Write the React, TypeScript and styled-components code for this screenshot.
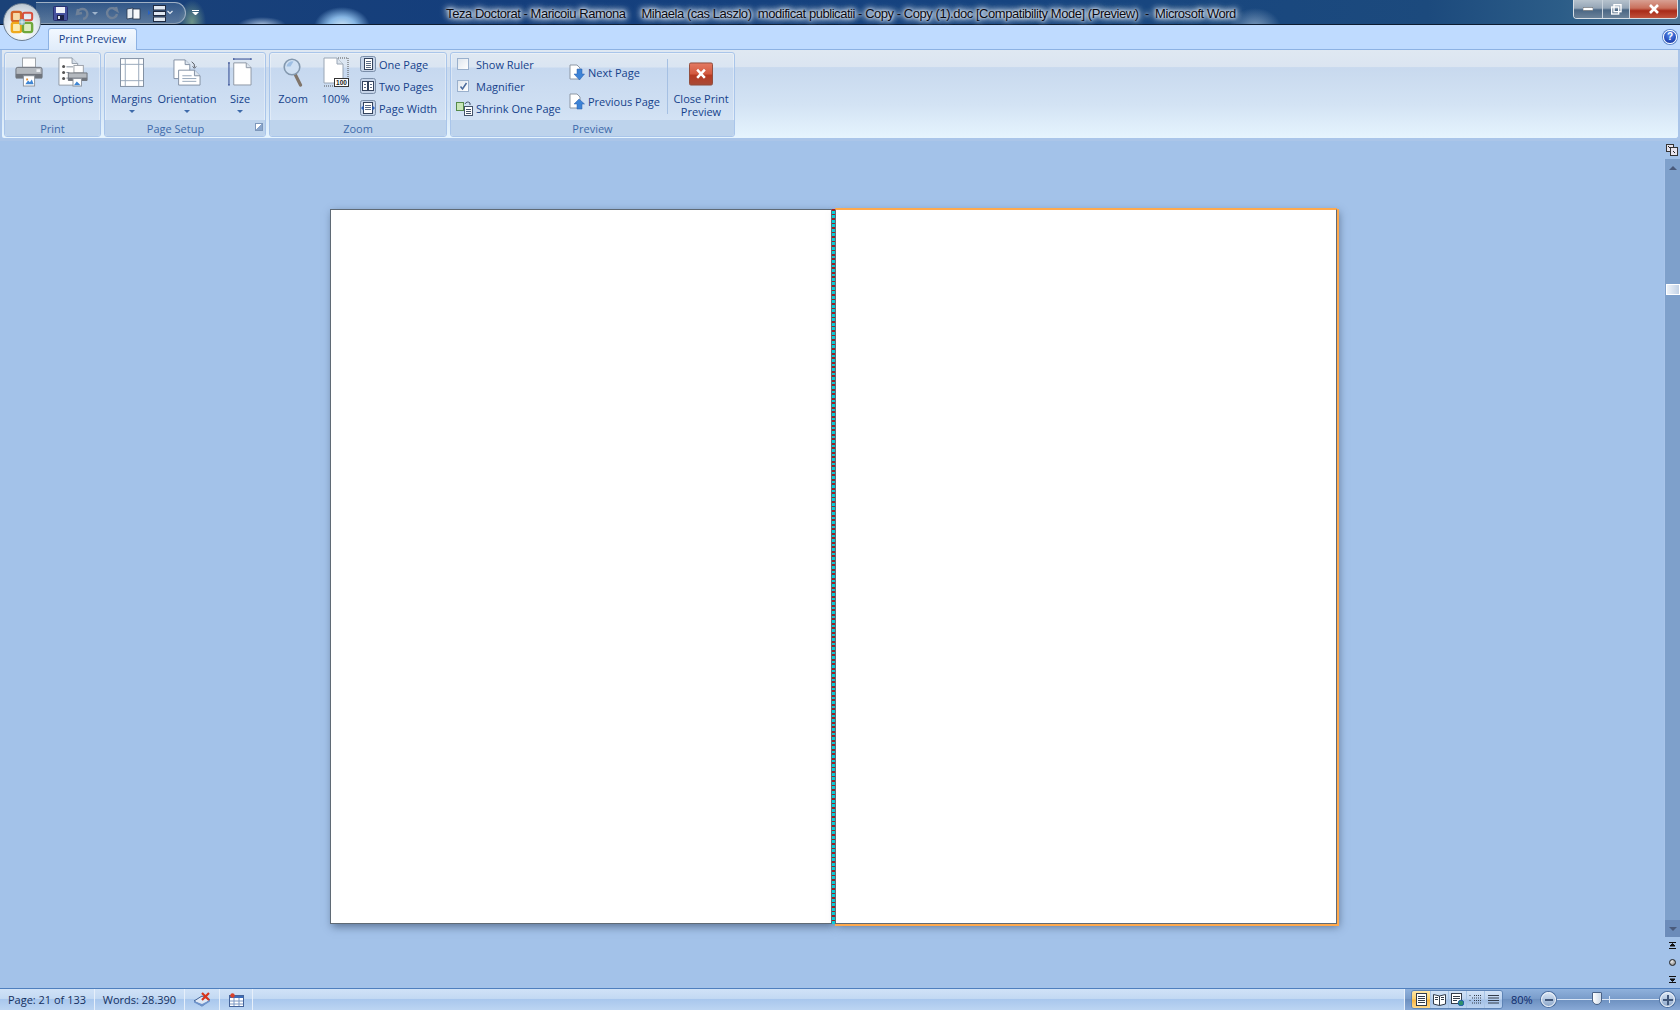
import React from 'react';
import styled, { createGlobalStyle } from 'styled-components';

const GlobalStyle = createGlobalStyle`
  html, body {
    margin: 0;
    padding: 0;
    height: 100%;
    overflow: hidden;
    background: #a3c2e9;
  }
  #root { height: 100%; }
`;

const Shell = styled.div`
  width: 1680px;
  height: 1010px;
  display: flex;
  flex-direction: column;
  overflow: hidden;
  background: #abc5e8;
  font-family: 'Open Sans', 'Noto Sans', 'Liberation Sans', sans-serif;
  color: #15428b;
`;

/* ---------- title bar ---------- */
const TitleBar = styled.div`
  height: 24px;
  flex: none;
  display: flex;
  align-items: flex-start;
  border-bottom: 1px solid #0d1c30;
  background:
    radial-gradient(ellipse 28px 20px at 342px 27px, #d3e8f8 0%, #86b6e4 50%, transparent 100%),
    radial-gradient(ellipse 24px 8px at 262px 25px, #a8bfdc 0%, transparent 100%),
    radial-gradient(ellipse 14px 22px at 192px 22px, #6d9488 0%, transparent 100%),
    radial-gradient(ellipse 26px 20px at 1255px 28px, #7e9cbd 0%, transparent 100%),
    linear-gradient(90deg, #1b4278 0%, #143e7c 30%, #164480 60%, #1c4a7d 85%, #2c5d88 93%, #4d7595 100%);
`;

const Orb = styled.div`
  width: 38px;
  height: 38px;
  flex: none;
  margin: 3px 0 0 3px;
  border-radius: 50%;
  background: radial-gradient(circle at 50% 72%, #ffffff 0%, #e6edf3 45%, #a9b6c3 100%);
  border: 1px solid #6d7f93;
  box-sizing: border-box;
  display: flex;
  align-items: center;
  justify-content: center;
  z-index: 2;
`;

const Quick = styled.div`
  margin: 2px 0 0 -5px;
  padding-left: 17px;
  height: 22px;
  width: 150px;
  flex: none;
  border: 1px solid #9fb0c4;
  border-left: none;
  border-bottom-color: #8a9db2;
  border-radius: 0 12px 12px 0;
  background: linear-gradient(180deg, #4d70987a 0%, #7f97b0a0 100%);
  display: flex;
  align-items: center;
  gap: 7px;
  box-sizing: border-box;
`;

const QuickGroup = styled.div`
  display: flex;
  align-items: center;
  gap: 3px;
`;

const QuickMiniCaret = styled.div`
  width: 0;
  height: 0;
  border: 3px solid transparent;
  border-bottom: none;
  border-top-color: #9fb4cc;
`;

const QuickCaret = styled.div`
  margin: 10px 0 0 6px;
  width: 7px;
  flex: none;
  border-top: 1px solid #fff;
  &::after {
    content: '';
    display: block;
    margin-top: 1px;
    border: 3.5px solid transparent;
    border-bottom: none;
    border-top-color: #fff;
  }
`;

const TitleText = styled.div`
  flex: 1;
  text-align: center;
  white-space: pre;
  margin-right: 90px;
  padding-top: 6px;
  font-family: 'Liberation Sans', sans-serif;
  font-size: 13px;
  letter-spacing: -0.455px;
  line-height: 15px;
  color: #0a0a12;
  text-shadow: 0 0 6px #e8f2ff, 0 0 6px #e8f2ff, 0 0 10px #fff, 0 0 3px #fff;
`;

const WindowButtons = styled.div`
  display: flex;
  flex: none;
  margin-right: 2px;
  height: 18px;
  border: 1px solid #d8dfe6;
  border-top: none;
  border-radius: 0 0 4px 4px;
  overflow: hidden;
`;

const WinButton = styled.div<{ $w: number; $red?: boolean }>`
  width: ${(p) => p.$w}px;
  display: flex;
  align-items: center;
  justify-content: center;
  border-left: 1px solid #c8d2dc;
  &:first-child { border-left: none; }
  background: ${(p) =>
    p.$red
      ? 'linear-gradient(180deg, #d8a093 0%, #c9705c 45%, #a92a18 60%, #c0523c 100%)'
      : 'linear-gradient(180deg, #b6c2cd 0%, #94a5b6 45%, #4a6684 55%, #6b8299 100%)'};
`;

/* ---------- ribbon ---------- */
const TabRow = styled.div`
  height: 24px;
  flex: none;
  background: #bfdbff;
  display: flex;
  align-items: flex-end;
  justify-content: space-between;
  padding: 0 4px 0 48px;
  border-bottom: 1px solid #8db2e3;
`;

const Tab = styled.div`
  width: 89px;
  height: 22px;
  box-sizing: border-box;
  margin-bottom: -1px;
  padding-top: 2px;
  text-align: center;
  font-size: 11px;
  line-height: 16px;
  border: 1px solid #8db2e3;
  border-bottom: none;
  border-radius: 3px 3px 0 0;
  background: linear-gradient(180deg, #f2f8ff 0%, #e0ecfa 100%);
`;

const Help = styled.div`
  width: 14px;
  height: 14px;
  margin: 0 -1px 5px 0;
  border-radius: 50%;
  background: radial-gradient(circle at 50% 30%, #5a8ff0, #1a3fae 75%);
  border: 1px solid #fff;
  box-shadow: 0 0 0 1px #5f86c9;
  box-sizing: border-box;
  color: #fff;
  font: bold 10px/12px 'Liberation Sans', sans-serif;
  text-align: center;
`;

const Ribbon = styled.div`
  height: 89px;
  flex: none;
  box-sizing: border-box;
  margin: 0 1px 2px;
  padding: 2px 3px 1px 2px;
  display: flex;
  gap: 3px;
  border: 1px solid #a9c5ea;
  border-top: none;
  border-radius: 0 0 3px 3px;
  background: linear-gradient(180deg, #dfe8f2 0%, #dbe5f1 19%, #c8d9ee 20%, #d3e3f4 62%, #e6f4fe 100%);
`;

const Group = styled.div<{ $w: number }>`
  width: ${(p) => p.$w}px;
  flex: none;
  box-sizing: border-box;
  display: flex;
  flex-direction: column;
  border: 1px solid #a9c5ea;
  border-radius: 3px;
  overflow: hidden;
  background: linear-gradient(180deg, #dfe8f2 0%, #dae5f2 17%, #c6d8ef 18%, #d0e0f3 70%, #d9e7f8 100%);
  box-shadow: inset 0 0 0 1px rgba(255, 255, 255, 0.35);
`;

const GroupBody = styled.div<{ $pad?: number }>`
  flex: 1;
  display: flex;
  padding: 2px 0 0 ${(p) => p.$pad ?? 0}px;
  min-height: 0;
`;

const GroupLabel = styled.div<{ $offset?: number }>`
  height: 16px;
  flex: none;
  box-sizing: border-box;
  padding-right: ${(p) => p.$offset ?? 0}px;
  display: flex;
  align-items: center;
  justify-content: center;
  position: relative;
  font-size: 11px;
  line-height: 15px;
  color: #3e6aaa;
  background: #bdd3ec;
`;

const Launcher = styled.div`
  position: absolute;
  right: 2px;
  top: 3px;
  width: 8px;
  height: 8px;
  box-sizing: border-box;
  border: 1px solid #7d97ba;
  background: linear-gradient(135deg, #fff 50%, #8aa6cc 50%);
`;

const BigButton = styled.div<{ $w: number }>`
  width: ${(p) => p.$w}px;
  flex: none;
  display: flex;
  flex-direction: column;
  align-items: center;
  text-align: center;
  font-size: 11px;
  line-height: 13px;
  white-space: nowrap;
`;

const BigIcon = styled.div<{ $shift?: number }>`
  height: 34px;
  box-sizing: border-box;
  padding-top: ${(p) => p.$shift ?? 0}px;
  display: flex;
  align-items: center;
  justify-content: center;
  margin-bottom: 3px;
  flex: none;
`;

const DownCaret = styled.div`
  width: 0;
  height: 0;
  margin-top: 5px;
  border: 3px solid transparent;
  border-bottom: none;
  border-top: 3px solid #3e6aaa;
`;

const SmallColumn = styled.div<{ $w: number; $gap?: number; $top?: number }>`
  width: ${(p) => p.$w}px;
  flex: none;
  display: flex;
  flex-direction: column;
  gap: ${(p) => p.$gap ?? 0}px;
  margin-top: ${(p) => p.$top ?? 0}px;
`;

const SmallRow = styled.div`
  height: 22px;
  display: flex;
  align-items: center;
  gap: 3px;
  padding-left: 1px;
  font-size: 11px;
  white-space: nowrap;
`;

const CheckBox = styled.div<{ $on?: boolean }>`
  width: 10px;
  height: 10px;
  flex: none;
  margin: 0 4px 0 1px;
  border: 1px solid #9ab0cc;
  background: linear-gradient(135deg, #dfe6ee, #ffffff);
  display: flex;
  align-items: center;
  justify-content: center;
`;

const VDivider = styled.div`
  width: 1px;
  height: 55px;
  margin: 4px 0 0;
  flex: none;
  background: #a5c0e3;
`;

/* ---------- document area ---------- */
const Middle = styled.div`
  flex: 1;
  display: flex;
  min-height: 0;
  background: #a3c2e9;
`;

const Preview = styled.div`
  flex: 1;
  display: flex;
  align-items: flex-start;
  padding: 68px 0 0 330px;
`;

const Page = styled.div<{ $active?: boolean }>`
  width: 502px;
  height: 715px;
  box-sizing: border-box;
  flex: none;
  background: #fff;
  border: 1px solid #5f6a75;
  ${(p) => (p.$active ? 'border-top-color: #ffa94d;' : '')}
  box-shadow: ${(p) =>
    p.$active ? '0 -1px 0 #ffa94d, 2px 2px 0 #ffa94d, 2px 0 0 #ffa94d, 0 2px 0 #ffa94d,' : ''} 2px 3px 8px rgba(50, 70, 100, 0.6);
`;

const PageSeam = styled.div`
  width: 3px;
  height: 715px;
  flex: none;
  background: repeating-linear-gradient(180deg, #b01818 0 1.5px, #00e0e8 1.5px 4.5px);
`;

const ScrollBar = styled.div`
  width: 16px;
  flex: none;
  display: flex;
  flex-direction: column;
`;

const SplitIcon = styled.div`
  height: 18px;
  flex: none;
  display: flex;
  align-items: center;
  justify-content: center;
`;

const Track = styled.div`
  flex: 1;
  display: flex;
  flex-direction: column;
  align-items: center;
  background: #7ea0cb;
  border-left: 1px solid #a9c5ea;
`;

const TrackArrow = styled.div<{ $up?: boolean }>`
  height: 17px;
  width: 100%;
  flex: none;
  display: flex;
  align-items: center;
  justify-content: center;
  ${(p) => (p.$up ? '' : 'background: #6c8cba;')}
  &::after {
    content: '';
    border: 4px solid transparent;
    ${(p) => (p.$up ? 'border-top: none; border-bottom: 4px solid #4a5b7c;' : 'border-bottom: none; border-top: 4px solid #4a5b7c;')}
  }
`;

const Thumb = styled.div`
  width: 14px;
  height: 11px;
  margin-top: 108px;
  flex: none;
  border: 1px solid #fff;
  box-sizing: border-box;
  background: linear-gradient(90deg, #eef3f9, #c3d2e6);
`;

const TrackGap = styled.div`
  flex: 1;
`;

const BrowseButtons = styled.div`
  height: 51px;
  flex: none;
  display: flex;
  flex-direction: column;
  align-items: center;
  justify-content: center;
  gap: 10px;
  box-sizing: border-box;
`;

const BrowseBall = styled.div`
  width: 7px;
  height: 7px;
  box-sizing: border-box;
  border-radius: 50%;
  border: 1px solid #222;
  background: radial-gradient(circle at 35% 30%, #eee, #777);
`;

/* ---------- status bar ---------- */
const StatusBar = styled.div`
  height: 22px;
  flex: none;
  box-sizing: border-box;
  display: flex;
  align-items: center;
  border-top: 1px solid #4f7fbe;
  background: linear-gradient(180deg, #d0e2f7 0%, #c3d9f3 45%, #a9c7ed 50%, #bcd5f2 100%);
  font-size: 11px;
  color: #15305e;
`;

const StatusCell = styled.div<{ $w: number }>`
  width: ${(p) => p.$w}px;
  height: 100%;
  flex: none;
  box-sizing: border-box;
  display: flex;
  align-items: center;
  justify-content: center;
  border-right: 1px solid #e6effa;
  white-space: nowrap;
`;

const StatusFill = styled.div`
  flex: 1;
  height: 100%;
`;

const ViewRight = styled.div`
  width: 276px;
  height: 100%;
  flex: none;
  display: flex;
  align-items: center;
  padding: 0 4px 0 6px;
  box-sizing: border-box;
  background: linear-gradient(180deg, #8fb1dc 0%, #7a9dcb 45%, #6d90c0 50%, #88a9d6 100%);
  border-left: 1px solid #e6effa;
`;

const ViewButtons = styled.div`
  display: flex;
  height: 19px;
  box-sizing: border-box;
  border: 1px solid #5d83b5;
  border-radius: 3px;
  overflow: hidden;
  flex: none;
`;

const ViewButton = styled.div<{ $on?: boolean }>`
  width: 18px;
  box-sizing: border-box;
  display: flex;
  align-items: center;
  justify-content: center;
  border-left: 1px solid #a8c4e6;
  &:first-child { border-left: none; }
  background: ${(p) =>
    p.$on
      ? 'linear-gradient(180deg, #ffe7a8 0%, #ffd36e 45%, #f8b544 55%, #ffd98a 100%)'
      : 'linear-gradient(180deg, #d2e2f6 0%, #bed4f0 45%, #a3c0e6 55%, #bcd3f0 100%)'};
`;

const ZoomPct = styled.div`
  width: 29px;
  margin-left: 8px;
  flex: none;
  font-size: 11px;
  color: #0d2a6b;
`;

const ZoomRound = styled.div`
  width: 15px;
  height: 15px;
  margin: 0 1px;
  flex: none;
  box-sizing: border-box;
  border-radius: 50%;
  border: 1px solid #fff;
  box-shadow: 0 0 0 1px #4e6f9e;
  background: linear-gradient(180deg, #d6e3f3, #8ea9cc);
  display: flex;
  align-items: center;
  justify-content: center;
`;

const ZoomTrack = styled.div`
  flex: 1;
  height: 1px;
  background: #d9e6f6;
  position: relative;
`;

const ZoomTick = styled.div`
  position: absolute;
  left: 50.500%;
  top: -3px;
  width: 1px;
  height: 7px;
  background: #d9e6f6;
`;

const ZoomKnob = styled.div`
  position: absolute;
  left: 34.600%;
  top: -7px;
  width: 8px;
  height: 11px;
  border: 1px solid #4a6387;
  border-radius: 1px 1px 5px 5px;
  background: linear-gradient(90deg, #fff, #cfdbe9);
`;

const OfficeLogo = () => (
  <svg width="24" height="24" viewBox="0 0 26 26">
    <rect x="2" y="2" width="10" height="10" rx="2" fill="#f6d9a8" stroke="#d4662a" strokeWidth="2.6" />
    <rect x="14" y="3" width="10" height="8" rx="2" fill="none" stroke="#d6503f" strokeWidth="2.2" />
    <rect x="2" y="14" width="10" height="10" rx="2" fill="#fbeab0" stroke="#efa91c" strokeWidth="2.6" />
    <rect x="14" y="14" width="10" height="10" rx="2" fill="#dcecc0" stroke="#6fa83c" strokeWidth="2.6" />
    <rect x="10" y="10" width="6" height="6" fill="#88b8c8" />
    <path d="M13 10 V16 M10 13 H16" stroke="#e6f2f6" />
  </svg>
);

const SaveIcon = () => (
  <svg width="15" height="15" viewBox="0 0 15 15">
    <rect x="0.500" y="0.500" width="14" height="14" rx="1" fill="#46519e" stroke="#26306e" />
    <rect x="3" y="1" width="9" height="6" fill="#eef1f8" />
    <rect x="4" y="9" width="7" height="5" fill="#1c2146" />
    <rect x="5" y="10" width="2" height="3" fill="#dfe3ee" />
  </svg>
);

const UndoIcon = ({ flip }: { flip?: boolean }) => (
  <svg width="14" height="14" viewBox="0 0 14 14" fill="none" stroke="#6f8198" strokeWidth="2.4">
    {flip ? <path d="M11 4 A5 5 0 1 0 12 8" /> : <path d="M3 3 L2 8 L7 7 M2.5 7 A5 5 0 1 1 8 13" />}
    {flip && <path d="M8 2 L12 4.500 L11 1" />}
  </svg>
);

const BookIcon = () => (
  <svg width="15" height="13" viewBox="0 0 15 13">
    <path d="M1 2 L7 1 L7 11 L1 12 Z" fill="#e8eef4" stroke="#27364c" strokeWidth="0.8" />
    <rect x="7" y="2" width="7" height="10" fill="#f6f8fb" stroke="#27364c" strokeWidth="0.8" />
  </svg>
);

const LayoutIcon = () => (
  <svg width="25" height="17" viewBox="0 0 25 17">
    <path d="M0 5 L3 8 L0 10 Z" fill="#2a62c2" />
    <rect x="5.500" y="0.500" width="12" height="4.500" fill="#dfe8f2" stroke="#1f2a40" />
    <rect x="5.500" y="6.500" width="12" height="4" fill="#dfe8f2" stroke="#1f2a40" />
    <rect x="5.500" y="12" width="12" height="4.500" fill="#dfe8f2" stroke="#1f2a40" />
    <path d="M19.500 6 L22 8.500 L24.500 6" fill="none" stroke="#dfe8f2" strokeWidth="1.200" />
  </svg>
);

const PrinterIcon = () => (
  <svg width="28" height="30" viewBox="0 0 30 32">
    <rect x="8" y="1" width="14" height="10" fill="#fdfdfd" stroke="#9a9fa6" />
    <path d="M3 11 H27 a2 2 0 0 1 2 2 V22 H1 V13 a2 2 0 0 1 2 -2 Z" fill="#b4b9bf" stroke="#6b7078" />
    <rect x="1" y="18" width="28" height="5" fill="#70757d" />
    <rect x="23" y="13" width="4" height="3" fill="#e9ecf0" />
    <rect x="9" y="20" width="12" height="11" fill="#fff" stroke="#8a919a" />
    <path d="M11 29 L14 25 L16 27 L18 24 L20 29 Z" fill="#3f86d4" />
    <rect x="12" y="23" width="2" height="2" fill="#e0903a" />
  </svg>
);

const OptionsIcon = () => (
  <svg width="30" height="30" viewBox="0 0 32 32">
    <path d="M1 1 H15 L21 7 V30 H1 Z" fill="#fff" stroke="#8d97a4" />
    <path d="M15 1 V7 H21" fill="#d7e0ea" stroke="#8d97a4" />
    <g fill="#555">
      <circle cx="6" cy="10" r="1.600" />
      <circle cx="6" cy="16.500" r="1.600" />
      <circle cx="6" cy="23" r="1.600" />
    </g>
    <path d="M9 10.500 H16 M9 16.500 H12 M9 22.500 H12" stroke="#7d8894" />
    <rect x="17" y="9" width="10" height="8" fill="#fdfdfd" stroke="#9a9fa6" />
    <path d="M11 17 H31 V25 H11 Z" fill="#b4b9bf" stroke="#6b7078" />
    <rect x="11" y="22" width="20" height="3" fill="#70757d" />
    <rect x="16" y="23" width="9" height="8" fill="#fff" stroke="#8a919a" />
    <path d="M17 30 L20 26 L22 28 L24 30 Z" fill="#3f86d4" />
  </svg>
);

const MarginsIcon = () => (
  <svg width="24" height="29" viewBox="0 0 25 30">
    <rect x="0.500" y="0.500" width="24" height="29" fill="#fff" stroke="#7f8da0" />
    <path d="M5.500 1 V29 M19.500 1 V29 M1 6.500 H24 M1 23.500 H24" stroke="#97a6b9" />
  </svg>
);

const OrientationIcon = () => (
  <svg width="28" height="27" viewBox="0 0 30 29">
    <path d="M1 1 H13 L18 6 V21 H1 Z" fill="#fff" stroke="#7f8da0" />
    <path d="M13 1 V6 H18" fill="#dde5ee" stroke="#7f8da0" />
    <path d="M6 12 H23 L29 18 V28 H6 Z" fill="#fff" stroke="#7f8da0" />
    <path d="M23 12 V18 H29" fill="#dde5ee" stroke="#7f8da0" />
    <path d="M10 18 H20 M10 21 H25 M10 24 H25" stroke="#8fa0b5" />
    <path d="M20 3 Q24 5 23 9 M21 8 L23 10 L25 8" fill="none" stroke="#52555c" />
  </svg>
);

const SizeIcon = () => (
  <svg width="24" height="28" viewBox="0 0 25 29">
    <path d="M6 1 H24 M6 0 V2 M24 0 V2 M1 5 V28 M0 5 H2 M0 28 H2" stroke="#27408b" fill="none" />
    <path d="M6 5 H19 L24 10 V28 H6 Z" fill="#fff" stroke="#8d97a4" />
    <path d="M19 5 V10 H24" fill="#dde5ee" stroke="#8d97a4" />
  </svg>
);

const MagnifierIcon = () => (
  <svg width="20" height="29" viewBox="0 0 20 29">
    <path d="M12 16 L17.500 27" stroke="#80756a" strokeWidth="3.200" strokeLinecap="round" />
    <circle cx="9" cy="9" r="7.800" fill="#cfe0f3" stroke="#8398ae" strokeWidth="1.600" />
    <path d="M3.500 8.500 A5.800 5.800 0 0 1 10.500 3.500 L7.500 8.500 Z" fill="#9fbfe3" />
  </svg>
);

const FullPageIcon = () => (
  <svg width="26" height="30" viewBox="0 0 26 30">
    <path d="M1 1 H14 L20 7 V26 H1 Z" fill="#fff" stroke="#9aa6b5" />
    <path d="M14 1 V7 H20" fill="#dde5ee" stroke="#9aa6b5" />
    <path d="M15 1 H25 V21 M1 29 H11" fill="none" stroke="#555" strokeDasharray="1 1" />
    <rect x="11.500" y="21.500" width="14" height="8" fill="#fff" stroke="#333" />
    <text x="18.500" y="28" textAnchor="middle" fontFamily="Liberation Sans" fontSize="6.500" fontWeight="700" fill="#222">100</text>
  </svg>
);

const SmallPageIcon = ({ kind }: { kind: 'one' | 'two' | 'width' }) => (
  <svg width="16" height="16" viewBox="0 0 16 16">
    <rect x="0.500" y="0.500" width="15" height="15" rx="2" fill="#c6d4e8" stroke="#7a8ea9" />
    {kind === 'one' && (
      <>
        <rect x="4.500" y="2.500" width="8" height="11" fill="#fff" stroke="#33425c" />
        <path d="M6 5.500 H11 M6 7.500 H11 M6 9.500 H11 M6 11.500 H11" stroke="#5a6b84" />
      </>
    )}
    {kind === 'two' && (
      <>
        <rect x="2.500" y="3.500" width="5" height="9" fill="#fff" stroke="#33425c" />
        <rect x="8.500" y="3.500" width="5" height="9" fill="#fff" stroke="#33425c" />
        <path d="M4 6.500 H6 M4 9.500 H6 M10 6.500 H12 M10 9.500 H12" stroke="#5a6b84" />
      </>
    )}
    {kind === 'width' && (
      <>
        <rect x="3.500" y="2.500" width="9" height="11" fill="#fff" stroke="#33425c" />
        <path d="M5 5.500 H11 M5 7.500 H11 M5 9.500 H11" stroke="#5a6b84" />
        <path d="M1 8 L3.500 5.500 V10.500 Z M15 8 L12.500 5.500 V10.500 Z" fill="#2a62c2" />
      </>
    )}
  </svg>
);

const ShrinkIcon = () => (
  <svg width="17" height="15" viewBox="0 0 17 15">
    <rect x="0.500" y="1.500" width="7" height="8" fill="#c8e6b8" stroke="#558a4a" />
    <rect x="8.500" y="5.500" width="8" height="9" fill="#fff" stroke="#44536b" />
    <path d="M10 8.500 H15 M10 10.500 H15 M10 12.500 H15" stroke="#44536b" />
    <path d="M9 3 A3 3 0 0 1 14 2 V4" fill="none" stroke="#44536b" />
  </svg>
);

const NavPageIcon = ({ up }: { up?: boolean }) => (
  <svg width="16" height="17" viewBox="0 0 16 17">
    <path d="M1 1 H8 L11 4 V15 H1 Z" fill="#fff" stroke="#8d97a4" />
    {up ? (
      <path d="M10 6 L15.500 11 H13 V16 H8 V11 H5 Z" fill="#3d83d6" stroke="#2a5ca8" strokeWidth="0.500" />
    ) : (
      <path d="M8 5 H13 V10 H15.500 L10.500 16 L5 10 H8 Z" fill="#3d83d6" stroke="#2a5ca8" strokeWidth="0.500" />
    )}
  </svg>
);

const CloseIcon = () => (
  <svg width="24" height="24" viewBox="0 0 25 24">
    <defs>
      <linearGradient id="closeFill" x1="0" y1="0" x2="0" y2="1">
        <stop offset="0" stopColor="#e47a63" />
        <stop offset="0.5" stopColor="#d35a40" />
        <stop offset="0.55" stopColor="#b63a22" />
        <stop offset="1" stopColor="#a84b38" />
      </linearGradient>
    </defs>
    <rect x="0.500" y="0.500" width="24" height="23" rx="1.500" fill="url(#closeFill)" stroke="#8f4a3a" />
    <path d="M8.500 7.500 L16.500 16 M16.500 7.500 L8.500 16" stroke="#fff" strokeWidth="2.600" />
  </svg>
);

const SplitGlyph = () => (
  <svg width="12" height="12" viewBox="0 0 12 12">
    <rect x="0.500" y="0.500" width="7" height="7" fill="#e8e4ee" stroke="#333" />
    <rect x="4.500" y="3.500" width="7" height="8" fill="#e8e4ee" stroke="#333" />
    <path d="M2 2 L4 4 M7 7 L9 9" stroke="#222" />
  </svg>
);

const DoubleArrow = ({ up }: { up?: boolean }) => (
  <svg width="7" height="7" viewBox="0 0 7 7">
    {up ? (
      <path d="M0 0.500 H7 M3.500 1.500 L6 4 H1 Z M0 6.500 H7" stroke="#111" fill="#111" />
    ) : (
      <path d="M0 0.500 H7 M1 3 H6 L3.500 5.500 Z M0 6.500 H7" stroke="#111" fill="#111" />
    )}
  </svg>
);

const ProofIcon = () => (
  <svg width="18" height="15" viewBox="0 0 18 15">
    <path d="M1 9 L9 4 L17 8 L9 14 Z" fill="#dfe8f5" stroke="#3e5f94" />
    <path d="M1 9 L9 12 L17 8 L17 9.500 L9 14.500 L1 10.500 Z" fill="#6e93cb" />
    <path d="M9 1 L16 8 M16 1 L9 8" stroke="#d8341c" strokeWidth="2.200" />
  </svg>
);

const MacroIcon = () => (
  <svg width="15" height="14" viewBox="0 0 15 14">
    <rect x="0.500" y="2.500" width="14" height="11" fill="#fff" stroke="#44639a" />
    <rect x="1" y="3" width="13" height="2" fill="#3d6cb9" />
    <path d="M1 8 H14 M1 11 H14 M5 5 V13 M10 5 V13" stroke="#7b97c4" />
    <circle cx="3.500" cy="2.500" r="2.200" fill="#d8402a" />
  </svg>
);

const ViewGlyph = ({ kind }: { kind: number }) => (
  <svg width="13" height="13" viewBox="0 0 13 13" fill="none" stroke="#333c4a">
    {kind === 0 && (
      <>
        <rect x="1.500" y="0.500" width="10" height="12" fill="#fff" />
        <path d="M3 3.500 H10 M3 5.500 H10 M3 7.500 H10 M3 9.500 H10" />
      </>
    )}
    {kind === 1 && (
      <>
        <path d="M0.500 1.500 L6.500 3 L12.500 1.500 V11 L6.500 12.500 L0.500 11 Z" fill="#fff" />
        <path d="M6.500 3 V12.500 M2 4.500 H5 M2 6.500 H5 M8 4.500 H11 M8 6.500 H11" />
      </>
    )}
    {kind === 2 && (
      <>
        <rect x="0.500" y="0.500" width="10" height="10" fill="#fff" />
        <path d="M2 3.500 H9 M2 5.500 H9 M2 7.500 H6" />
        <circle cx="10" cy="10" r="2.800" fill="#2f8f6a" stroke="#1f5fa8" />
      </>
    )}
    {kind === 3 && <path d="M5 2.500 H12 M3 5 H12 M5 7.500 H12 M3 10 H12 M1 2 V3 M1 7 V8" strokeDasharray="1 1" />}
    {kind === 4 && <path d="M1 2.500 H12 M1 5 H12 M1 7.500 H12 M1 10 H12" />}
  </svg>
);

export default function App() {
  return (
    <Shell>
      <GlobalStyle />
      <TitleBar>
        <Orb>
          <OfficeLogo />
        </Orb>
        <Quick>
          <SaveIcon />
          <QuickGroup>
            <UndoIcon />
            <QuickMiniCaret />
          </QuickGroup>
          <UndoIcon flip />
          <BookIcon />
          <LayoutIcon />
        </Quick>
        <QuickCaret />
        <TitleText>
          {'Teza Doctorat - Maricoiu Ramona     Mihaela (cas Laszlo)  modificat publicatii - Copy - Copy (1).doc [Compatibility Mode] (Preview)  -  Microsoft Word'}
        </TitleText>
        <WindowButtons>
          <WinButton $w={28}>
            <svg width="10" height="4" viewBox="0 0 10 4"><rect width="10" height="3" y="0.500" fill="#fff" stroke="#555" strokeWidth="0.500" /></svg>
          </WinButton>
          <WinButton $w={26}>
            <svg width="11" height="11" viewBox="0 0 11 11" fill="none" stroke="#fff" strokeWidth="1.400"><rect x="3" y="0.700" width="7" height="7" /><rect x="0.700" y="3" width="7" height="7" /></svg>
          </WinButton>
          <WinButton $w={47} $red>
            <svg width="12" height="10" viewBox="0 0 12 10"><path d="M2 1 L10 9 M10 1 L2 9" stroke="#fff" strokeWidth="2.600" /></svg>
          </WinButton>
        </WindowButtons>
      </TitleBar>

      <TabRow>
        <Tab>Print Preview</Tab>
        <Help>?</Help>
      </TabRow>

      <Ribbon>
        <Group $w={97}>
          <GroupBody $pad={2}>
            <BigButton $w={43}>
              <BigIcon><PrinterIcon /></BigIcon>
              Print
            </BigButton>
            <BigButton $w={46}>
              <BigIcon><OptionsIcon /></BigIcon>
              Options
            </BigButton>
          </GroupBody>
          <GroupLabel>Print</GroupLabel>
        </Group>

        <Group $w={162}>
          <GroupBody $pad={1}>
            <BigButton $w={51}>
              <BigIcon><MarginsIcon /></BigIcon>
              Margins
              <DownCaret />
            </BigButton>
            <BigButton $w={60}>
              <BigIcon><OrientationIcon /></BigIcon>
              Orientation
              <DownCaret />
            </BigButton>
            <BigButton $w={46}>
              <BigIcon><SizeIcon /></BigIcon>
              Size
              <DownCaret />
            </BigButton>
          </GroupBody>
          <GroupLabel $offset={19}>
            Page Setup
            <Launcher />
          </GroupLabel>
        </Group>

        <Group $w={178}>
          <GroupBody $pad={4}>
            <BigButton $w={38}>
              <BigIcon><MagnifierIcon /></BigIcon>
              Zoom
            </BigButton>
            <BigButton $w={47}>
              <BigIcon><FullPageIcon /></BigIcon>
              100%
            </BigButton>
            <SmallColumn $w={80} $top={-2}>
              <SmallRow><SmallPageIcon kind="one" />One Page</SmallRow>
              <SmallRow><SmallPageIcon kind="two" />Two Pages</SmallRow>
              <SmallRow><SmallPageIcon kind="width" />Page Width</SmallRow>
            </SmallColumn>
          </GroupBody>
          <GroupLabel>Zoom</GroupLabel>
        </Group>

        <Group $w={285}>
          <GroupBody $pad={4}>
            <SmallColumn $w={113} $top={-2}>
              <SmallRow><CheckBox />Show Ruler</SmallRow>
              <SmallRow>
                <CheckBox $on>
                  <svg width="9" height="9" viewBox="0 0 9 9"><path d="M1.500 4.500 L3.500 7 L7.500 1" fill="none" stroke="#4a6a9c" strokeWidth="1.500" /></svg>
                </CheckBox>
                Magnifier
              </SmallRow>
              <SmallRow><ShrinkIcon />Shrink One Page</SmallRow>
            </SmallColumn>
            <SmallColumn $w={99} $gap={7} $top={6}>
              <SmallRow><NavPageIcon />Next Page</SmallRow>
              <SmallRow><NavPageIcon up />Previous Page</SmallRow>
            </SmallColumn>
            <VDivider />
            <BigButton $w={66}>
              <BigIcon $shift={4}><CloseIcon /></BigIcon>
              Close Print
              <br />
              Preview
            </BigButton>
          </GroupBody>
          <GroupLabel>Preview</GroupLabel>
        </Group>
      </Ribbon>

      <Middle>
        <Preview>
          <Page />
          <PageSeam />
          <Page $active />
        </Preview>
        <ScrollBar>
          <SplitIcon><SplitGlyph /></SplitIcon>
          <Track>
            <TrackArrow $up />
            <Thumb />
            <TrackGap />
            <TrackArrow />
          </Track>
          <BrowseButtons>
            <DoubleArrow up />
            <BrowseBall />
            <DoubleArrow />
          </BrowseButtons>
        </ScrollBar>
      </Middle>

      <StatusBar>
        <StatusCell $w={95}>Page: 21 of 133</StatusCell>
        <StatusCell $w={90}>Words: 28.390</StatusCell>
        <StatusCell $w={35}><ProofIcon /></StatusCell>
        <StatusCell $w={33}><MacroIcon /></StatusCell>
        <StatusFill />
        <ViewRight>
          <ViewButtons>
            <ViewButton $on><ViewGlyph kind={0} /></ViewButton>
            <ViewButton><ViewGlyph kind={1} /></ViewButton>
            <ViewButton><ViewGlyph kind={2} /></ViewButton>
            <ViewButton><ViewGlyph kind={3} /></ViewButton>
            <ViewButton><ViewGlyph kind={4} /></ViewButton>
          </ViewButtons>
          <ZoomPct>80%</ZoomPct>
          <ZoomRound>
            <svg width="8" height="2" viewBox="0 0 8 2"><rect width="8" height="2" fill="#41577a" /></svg>
          </ZoomRound>
          <ZoomTrack>
            <ZoomKnob />
            <ZoomTick />
          </ZoomTrack>
          <ZoomRound>
            <svg width="10" height="10" viewBox="0 0 10 10"><path d="M0 5 H10 M5 0 V10" stroke="#41577a" strokeWidth="2" /></svg>
          </ZoomRound>
        </ViewRight>
      </StatusBar>
    </Shell>
  );
}
